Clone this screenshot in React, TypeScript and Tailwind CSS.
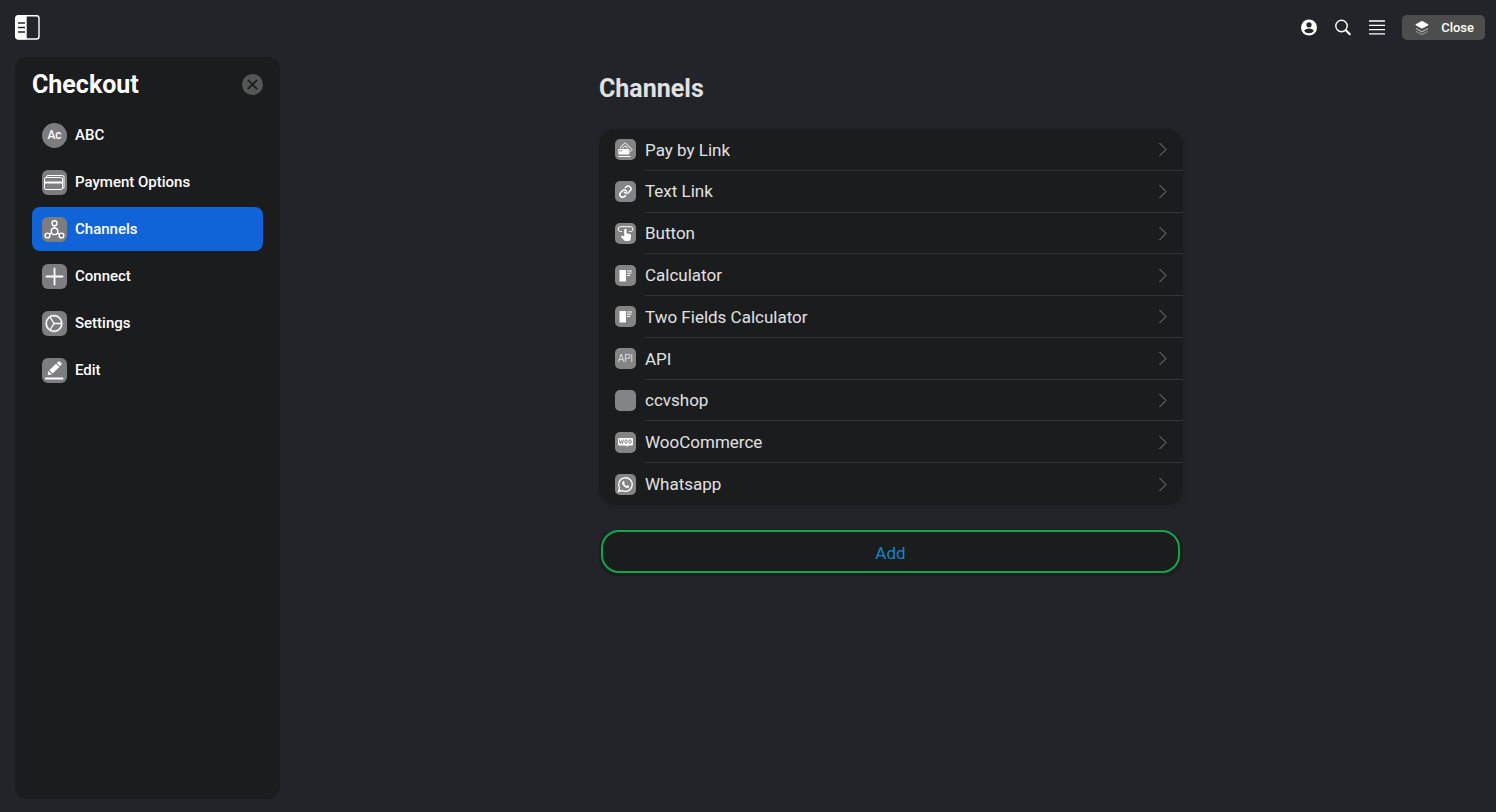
import React from "react";

type IconProps = { children?: React.ReactNode };

function Tile({ children }: IconProps) {
  return (
    <svg viewBox="0 0 25 25" className="size-[25px] shrink-0 rounded-md bg-[#7d7c80]" fill="none" stroke="#fff" aria-hidden="true">
      {children}
    </svg>
  );
}

function SmallTile({ children }: IconProps) {
  return (
    <svg viewBox="0 0 21 21" className="size-[21px] shrink-0 rounded-[5px] bg-[#848484]" fill="none" stroke="#fff" aria-hidden="true">
      {children}
    </svg>
  );
}

const calculatorIcon = (
  <>
    <path d="M4.500 5H11v11.500H4.500z" fill="#fff" stroke="none" />
    <path d="M12 6h5M12 8.200h4.500M12 10.400h3" strokeWidth="1" />
  </>
);

const menu = [
  {
    label: "Payment Options",
    icon: (
      <Tile>
        <path d="M4.500 8V7Q4.500 5.500 6 5.500H20.500q1.500 0 1.500 1.500V17q0 1.500-1.500 1.500" strokeWidth="1" />
        <rect x="2.500" y="7.500" width="18" height="12" rx="1.500" strokeWidth="1" />
        <path d="M2.500 12.500H20.500" strokeWidth="2.200" />
      </Tile>
    ),
  },
  {
    label: "Channels",
    active: true,
    icon: (
      <Tile>
        <g strokeWidth="1.400">
          <circle cx="12.500" cy="6.300" r="2.500" />
          <circle cx="12.500" cy="14.300" r="3.300" />
          <circle cx="5.500" cy="18.500" r="2.400" />
          <circle cx="19.500" cy="18.500" r="2.400" />
          <path d="M12.500 8.800V11M9.700 16l-2.100 1.200M15.300 16l2.100 1.200" />
        </g>
      </Tile>
    ),
  },
  {
    label: "Connect",
    icon: (
      <Tile>
        <path d="M12.500 4.500v16M4.500 12.500h16" strokeWidth="1.800" strokeLinecap="round" />
      </Tile>
    ),
  },
  {
    label: "Settings",
    icon: (
      <Tile>
        <circle cx="12" cy="12.500" r="7.700" strokeWidth="1.500" />
        <circle cx="12" cy="12.500" r="8.700" strokeWidth="0.600" strokeDasharray="1 1" />
        <path d="M12 12.500h7.500M12 12.500l-4-6.500M12 12.500l-4 6.500" strokeWidth="1.400" />
      </Tile>
    ),
  },
  {
    label: "Edit",
    icon: (
      <Tile>
        <path d="M3.800 20.500h16.700" strokeWidth="2" strokeLinecap="round" />
        <path d="M6 16.800l.6-3.300 2.800 2.700z" fill="#fff" strokeWidth="0.600" />
        <path d="M7.300 12.200l6.600-6.400 3.500 3.300-6.700 6.400zM14.700 5.100l1.600-1.400q.9-.6 1.700 0l1.300 1.300q.7.900 0 1.700l-1.400 1.500z" fill="#fff" stroke="none" />
      </Tile>
    ),
  },
];

const channels = [
  {
    label: "Pay by Link",
    icon: (
      <SmallTile>
        <path d="M4.800 9.200l4.600-5q.5-.5 1.100 0l6.300 6q.6.600 0 1.200l-1.300 1.300M7.300 9.500l2.600-2.700 3.200 2.700" strokeWidth="1" />
        <path d="M4 10h9.800q.7 0 .7.700v4.100q0 .7-.7.700H4q-.7 0-.7-.7v-4.100q0-.7.7-.7z" fill="#fff" stroke="none" />
        <path d="M4 11.800h3.500" stroke="#848484" strokeWidth="0.900" />
        <path d="M3.500 17.500h12" strokeWidth="1" />
      </SmallTile>
    ),
  },
  {
    label: "Text Link",
    icon: (
      <SmallTile>
        <g strokeLinecap="round" strokeWidth="2.600" transform="translate(3.700 3.900) scale(.56)">
          <path d="M10 13a5 5 0 0 0 7.540.54l3-3a5 5 0 0 0-7.070-7.070l-1.720 1.710" />
          <path d="M14 11a5 5 0 0 0-7.540-.54l-3 3a5 5 0 0 0 7.070 7.070l1.710-1.710" />
        </g>
      </SmallTile>
    ),
  },
  {
    label: "Button",
    icon: (
      <SmallTile>
        <path d="M7 8.500H5.500a2.400 2.400 0 0 1 0-4.800h10a2.400 2.400 0 0 1 0 4.800H14" strokeWidth="1" />
        <path d="M9.200 7q0-1.200 1.200-1.200T11.600 7v3.400l3.300.7q1.300.3 1.200 1.600l-.6 4.100q-.1 1.100-1.300 1.100h-3.600q-.7 0-1.200-.5L5.800 13.700q.8-1.400 2.100-.9l1.300.6z" fill="#fff" stroke="none" />
      </SmallTile>
    ),
  },
  { label: "Calculator", icon: <SmallTile>{calculatorIcon}</SmallTile> },
  { label: "Two Fields Calculator", icon: <SmallTile>{calculatorIcon}</SmallTile> },
  {
    label: "API",
    icon: (
      <span className="flex size-[21px] shrink-0 items-center justify-center rounded-[5px] bg-[#848484] text-[10px] font-light text-white" aria-hidden="true">
        API
      </span>
    ),
  },
  { label: "ccvshop", icon: <SmallTile /> },
  {
    label: "WooCommerce",
    icon: (
      <SmallTile>
        <path d="M4.200 6h12.600q1.200 0 1.200 1.200v5q0 1.200-1.200 1.200h-4.300l.5 1.500-2.500-1.500H4.200Q3 13.400 3 12.200v-5Q3 6 4.200 6z" fill="#fff" stroke="none" />
        <g stroke="#777" strokeWidth="0.900">
          <path d="M4.300 7.500l.9 4 1.400-2.800 1 2.800q.1-2.200 1-4" />
          <ellipse cx="11" cy="9.600" rx="1.200" ry="1.800" />
          <ellipse cx="15" cy="9.600" rx="1.200" ry="1.800" />
        </g>
      </SmallTile>
    ),
  },
  {
    label: "Whatsapp",
    icon: (
      <SmallTile>
        <path d="M3.500 17.500l1-3.600a6.800 6.800 0 1 1 2.600 2.600z" strokeWidth="1.300" />
        <path d="M8.300 7.100c.3-.2.700-.1.800.2l.6 1.400c.1.300-.1.600-.6 1.100.6 1.100 1.400 1.800 2.500 2.300.5-.7.800-.9 1.100-.8l1.400.7c.3.200.2.500.1.800-.4 1-1.400 1.400-2.400 1.100-2.600-.8-4-2.300-4.600-4.200-.2-1 .3-2.100 1.100-2.600z" fill="#fff" stroke="none" />
      </SmallTile>
    ),
  },
];

export default function App() {
  return (
    <div className="flex min-h-screen flex-col bg-[#232429] font-['Roboto',sans-serif] text-white">
      <header className="flex h-[57px] items-center justify-between pr-[11px] pb-[2px] pl-[15px]">
        <button type="button" aria-label="Toggle sidebar">
          <svg viewBox="0 0 25 25" className="size-[25px]" fill="none">
            <rect x="0.700" y="0.700" width="23.300" height="23.300" rx="2.500" stroke="#fff" strokeWidth="1.400" />
            <path d="M3 .5h8.700v23.800H3Q.5 24.300.5 21.800V3Q.5.500 3 .500z" fill="#fff" />
            <path d="M3 8h7M3 12.500h7M3 17h7" stroke="#232429" strokeWidth="1.700" />
          </svg>
        </button>
        <div className="flex items-center gap-4">
          <button type="button" aria-label="Account">
            <svg viewBox="0 0 18 18" className="size-[18px]">
              <circle cx="9" cy="8.500" r="8" fill="#fff" />
              <circle cx="9" cy="5.800" r="2.600" fill="#232429" />
              <path d="M4 11.800q2-2.200 5-2.200t5 2.200q-2 2.500-5 2.500t-5-2.500z" fill="#232429" />
            </svg>
          </button>
          <button type="button" aria-label="Search">
            <svg viewBox="0 0 18 18" className="size-[18px]" fill="none" stroke="#fff" strokeLinecap="round">
              <circle cx="7.500" cy="7" r="5.700" strokeWidth="1.400" />
              <path d="M11.800 11.300l4 4" strokeWidth="2" />
            </svg>
          </button>
          <button type="button" aria-label="Menu">
            <svg viewBox="0 0 18 18" className="size-[18px]" stroke="#fff" strokeWidth="1.300">
              <path d="M1 2h16M1 6.300h16M1 10.600h16M1 14.900h16" />
            </svg>
          </button>
          <button type="button" className="flex h-[25px] items-center gap-[11px] rounded-[5px] bg-[#4d4d4d] pr-[11px] pl-3 text-[13px] font-medium">
            <svg viewBox="0 0 16 16" className="size-4" fill="none">
              <path d="M2 11.300l6 3.200 6-3.200" stroke="#898989" strokeWidth="1.300" />
              <path d="M2 8.500l6 3.200 6-3.200" stroke="#aaa" strokeWidth="1.300" />
              <path d="M1.800 4.200L7.200 1.200Q8 .8 8.800 1.200l5.400 3q.7.500 0 1L8.800 8.300Q8 8.700 7.200 8.300L1.800 5.200q-.7-.5 0-1z" fill="#fff" />
            </svg>
            Close
          </button>
        </div>
      </header>

      <div className="flex flex-1 gap-[6px] pb-[13px] pl-[15px]">
        <aside className="w-[265px] shrink-0 rounded-xl bg-[#1b1c1d] px-[17px] pt-3">
          <div className="flex h-8 items-center justify-between">
            <h2 className="text-[25px] font-bold">Checkout</h2>
            <button type="button" aria-label="Close panel" className="pb-[2px]">
              <svg viewBox="0 0 21 21" className="size-[21px]">
                <circle cx="10.500" cy="10.500" r="10.500" fill="#565656" />
                <path d="M6.300 6.300l8.400 8.400M14.700 6.300l-8.400 8.400" stroke="#1b1c1d" strokeWidth="1.700" strokeLinecap="round" />
              </svg>
            </button>
          </div>
          <nav className="mt-3 flex flex-col gap-[3px] text-[15px] font-medium">
            <a href="#abc" className="flex h-11 items-center gap-2 rounded-lg px-[10px]">
              <span className="flex size-[25px] items-center justify-center rounded-full bg-[#7d7c80] text-xs" aria-hidden="true">
                Ac
              </span>
              ABC
            </a>
            {menu.map((item) => (
              <a
                key={item.label}
                href={"#" + item.label.toLowerCase().replace(" ", "-")}
                aria-current={item.active ? "page" : undefined}
                className={item.active ? "flex h-11 items-center gap-2 rounded-lg bg-[#1164d8] px-[10px]" : "flex h-11 items-center gap-2 rounded-lg px-[10px]"}
              >
                {item.icon}
                {item.label}
              </a>
            ))}
          </nav>
        </aside>

        <main className="flex flex-1 flex-col items-center">
          <div className="w-full max-w-[584px] pt-4 text-[#e1e1e1]">
            <h1 className="text-[25px] leading-8 font-bold">Channels</h1>
            <ul className="mt-6 grid min-h-[376px] auto-rows-fr rounded-2xl bg-[#1b1c1d] shadow-[0_2px_6px_rgba(0,0,0,0.12)]">
              {channels.map((channel, i) => (
                <li key={channel.label}>
                  <a href={"#" + channel.label.toLowerCase().replaceAll(" ", "-")} className="flex h-full items-stretch gap-[9px] pl-4">
                    <span className="flex items-center">{channel.icon}</span>
                    <span className={i < channels.length - 1 ? "flex flex-1 items-center justify-between border-b border-[#333436] pt-[2px] pr-4 text-[17px]" : "flex flex-1 items-center justify-between pt-[2px] pr-4 text-[17px]"}>
                      {channel.label}
                      <svg viewBox="0 0 9 16" className="h-4 w-[9px]" fill="none" stroke="#858585" aria-hidden="true">
                        <path d="M1.500 1L8 7.500l-6.500 6.500" />
                      </svg>
                    </span>
                  </a>
                </li>
              ))}
            </ul>
            <div className="mt-[25px] rounded-[18px] bg-[#1d1e20] pr-[3px] pb-[3px] pl-[2px]">
              <button type="button" className="h-[43px] w-full rounded-[18px] border-2 border-[#16a34a] bg-[#1b1c1d] pt-1 text-[17px] text-[#1583d0]">
                Add
              </button>
            </div>
          </div>
        </main>
      </div>
    </div>
  );
}
